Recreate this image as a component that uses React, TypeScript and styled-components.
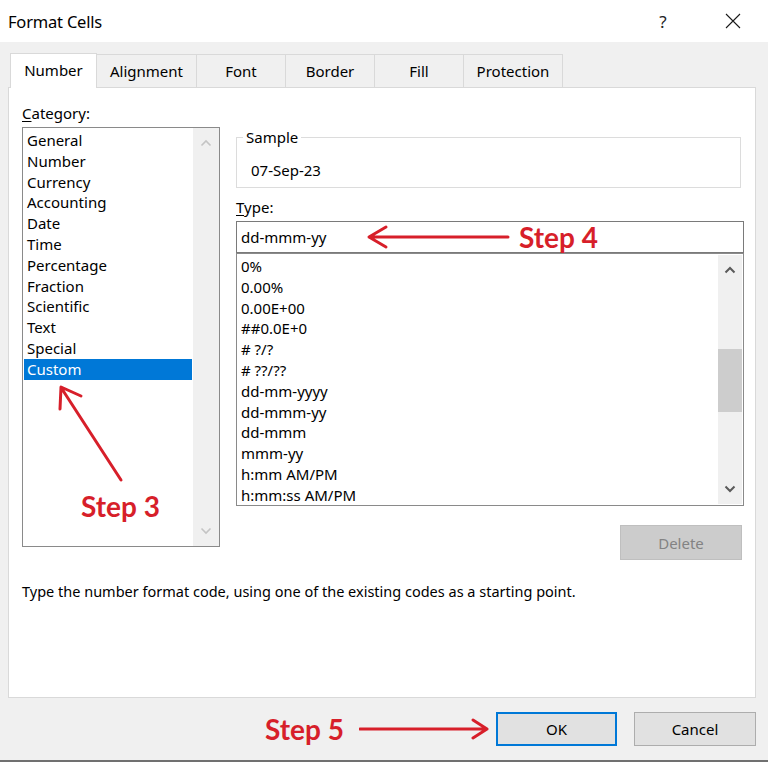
import styled, { createGlobalStyle } from 'styled-components';

const RED = '#d71f2a';
const UI_FONT = '"Noto Sans", "Open Sans", sans-serif';

const categories = [
  'General',
  'Number',
  'Currency',
  'Accounting',
  'Date',
  'Time',
  'Percentage',
  'Fraction',
  'Scientific',
  'Text',
  'Special',
  'Custom',
];

const formats = [
  '0%',
  '0.00%',
  '0.00E+00',
  '##0.0E+0',
  '# ?/?',
  '# ??/??',
  'dd-mm-yyyy',
  'dd-mmm-yy',
  'dd-mmm',
  'mmm-yy',
  'h:mm AM/PM',
  'h:mm:ss AM/PM',
];

const tabs = [
  { label: 'Number', width: 87 },
  { label: 'Alignment', width: 100 },
  { label: 'Font', width: 89 },
  { label: 'Border', width: 89 },
  { label: 'Fill', width: 89 },
  { label: 'Protection', width: 99 },
];

const GlobalStyle = createGlobalStyle`
  html, body {
    margin: 0;
    padding: 0;
  }
  body {
    background: #f0f0f0;
    font-family: ${UI_FONT};
  }
`;

const Window = styled.div`
  position: relative;
  width: 768px;
  height: 762px;
  overflow: hidden;
  box-sizing: border-box;
  display: flex;
  flex-direction: column;
  background: #f0f0f0;
  border-bottom: 2px solid #707070;
`;

const TitleBar = styled.header`
  height: 42px;
  flex-shrink: 0;
  display: flex;
  align-items: center;
  padding-left: 8px;
  background: #fff;
`;

const Title = styled.h1`
  margin: 0;
  font-size: 16.5px;
  font-weight: 400;
  color: #000;
  letter-spacing: -0.2px;
`;

const TitleControls = styled.div`
  margin-left: auto;
  margin-right: 12px;
  display: flex;
  align-items: center;
  gap: 24px;
`;

const TitleButton = styled.div`
  width: 46px;
  height: 42px;
  display: flex;
  align-items: center;
  justify-content: center;
  font-size: 17px;
  color: #222;
`;

const TabStrip = styled.nav`
  height: 35px;
  margin-top: 11px;
  padding-left: 10px;
  display: flex;
  align-items: flex-end;
`;

const Tab = styled.div<{ $active?: boolean; $width: number }>`
  position: relative;
  z-index: 1;
  box-sizing: border-box;
  width: ${(p) => p.$width}px;
  height: ${(p) => (p.$active ? 35 : 33)}px;
  margin-bottom: ${(p) => (p.$active ? 0 : 1)}px;
  display: flex;
  align-items: center;
  justify-content: center;
  padding-bottom: ${(p) => (p.$active ? 2 : 0)}px;
  background: ${(p) => (p.$active ? '#fff' : '#f0f0f0')};
  border: 1px solid #d9d9d9;
  border-bottom: none;
  border-left-width: ${(p) => (p.$active ? 1 : 0)}px;
  font-size: 15px;
  color: #000;
`;

const Panel = styled.section`
  box-sizing: border-box;
  width: 748px;
  height: 611px;
  margin: -1px 0 0 8px;
  padding: 15px 11px 0 13px;
  background: #fff;
  border: 1px solid #d9d9d9;
`;

const Columns = styled.div`
  display: grid;
  grid-template-columns: 198px 508px;
  column-gap: 16px;
  align-items: start;
`;

const Column = styled.div`
  display: flex;
  flex-direction: column;
`;

const FieldLabel = styled.div<{ $gap?: number }>`
  margin-top: ${(p) => p.$gap ?? 0}px;
  line-height: 20px;
  font-size: 15px;
  color: #000;
`;

const Key = styled.span`
  text-decoration: underline;
  text-underline-offset: 2px;
`;

const ListBox = styled.div<{ $height: number; $gap?: number }>`
  position: relative;
  box-sizing: border-box;
  height: ${(p) => p.$height}px;
  margin-top: ${(p) => p.$gap ?? 0}px;
  display: flex;
  border: 1px solid #8a8a8a;
  background: #fff;
`;

const Items = styled.ul<{ $pad: number }>`
  flex: 1;
  margin: 0;
  padding: 2px 1px 0 ${(p) => p.$pad}px;
  list-style: none;
  overflow: hidden;
`;

const Item = styled.li<{ $selected?: boolean }>`
  height: 20.8px;
  line-height: 20.8px;
  padding-left: 3px;
  font-size: 15px;
  white-space: nowrap;
  color: ${(p) => (p.$selected ? '#fff' : '#000')};
  background: ${(p) => (p.$selected ? '#0078d7' : 'transparent')};
`;

const ScrollTrack = styled.div<{ $width: number; $inset: number }>`
  width: ${(p) => p.$width}px;
  margin: ${(p) => p.$inset}px;
  display: flex;
  flex-direction: column;
  background: #f0f0f0;
`;

const ScrollButton = styled.div`
  height: 30px;
  flex-shrink: 0;
  display: flex;
  align-items: center;
  justify-content: center;
`;

const ScrollRail = styled.div`
  flex: 1;
`;

const Thumb = styled.div<{ $offset: number; $size: number }>`
  height: ${(p) => p.$size}px;
  margin-top: ${(p) => p.$offset}px;
  background: #cdcdcd;
`;

const SampleSet = styled.fieldset`
  box-sizing: border-box;
  width: 505px;
  min-width: 0;
  margin: 24px 0 0;
  padding: 13px 14px 7px;
  border: 1px solid #dcdcdc;
`;

const SampleLegend = styled.legend`
  margin-left: -8px;
  padding: 0 3px;
  line-height: 20px;
  font-size: 15px;
  color: #000;
`;

const SampleValue = styled.div`
  line-height: 20px;
  font-size: 15px;
  color: #000;
`;

const TypeField = styled.div`
  box-sizing: border-box;
  height: 32px;
  margin-top: 4px;
  padding-left: 4px;
  display: flex;
  align-items: center;
  border: 1px solid #7a7a7a;
  font-size: 15px;
  color: #000;
`;

const DeleteButton = styled.div`
  box-sizing: border-box;
  align-self: flex-end;
  width: 122px;
  height: 35px;
  margin: 19px 2px 0 0;
  display: flex;
  align-items: center;
  justify-content: center;
  background: #cccccc;
  border: 1px solid #bfbfbf;
  font-size: 15px;
  color: #838383;
`;

const Hint = styled.p`
  margin: 21px 0 0;
  line-height: 20px;
  font-size: 14.5px;
  color: #000;
`;

const Footer = styled.footer`
  height: 62px;
  flex-shrink: 0;
  display: flex;
  align-items: center;
  justify-content: flex-end;
  padding-right: 12px;
`;

const StepFive = styled.div`
  display: flex;
  align-items: center;
  gap: 15px;
  margin-right: 6px;
`;

const DialogButton = styled.div<{ $default?: boolean; $gap?: number }>`
  box-sizing: border-box;
  width: ${(p) => (p.$default ? 121 : 122)}px;
  height: 34px;
  margin-left: ${(p) => p.$gap ?? 0}px;
  display: flex;
  align-items: center;
  justify-content: center;
  background: #e1e1e1;
  border: ${(p) => (p.$default ? '2px solid #0078d7' : '1px solid #adadad')};
  font-size: 15px;
  color: #000;
`;

const StepLabel = styled.span`
  font-family: Lato, "Open Sans", sans-serif;
  font-weight: 700;
  font-size: 28px;
  line-height: 30px;
  color: ${RED};
  white-space: nowrap;
`;

const Callouts = styled.div`
  position: absolute;
  inset: 0;
  pointer-events: none;
`;

const CalloutLabel = styled(StepLabel)<{ $x: number; $y: number }>`
  position: absolute;
  left: ${(p) => p.$x}px;
  top: ${(p) => p.$y}px;
`;

const ArrowLayer = styled.svg`
  position: absolute;
  inset: 0;
`;

const Chevron = ({ up, color, weight }: { up?: boolean; color: string; weight: number }) => (
  <svg width="12" height="8" viewBox="0 0 12 8">
    <path
      d={up ? 'M1.5 6.5 L6 2 L10.5 6.5' : 'M1.5 1.5 L6 6 L10.5 1.5'}
      fill="none"
      stroke={color}
      strokeWidth={weight}
    />
  </svg>
);

const CloseIcon = () => (
  <svg width="16" height="16" viewBox="0 0 16 16">
    <path d="M1 1 L15 15 M15 1 L1 15" stroke="#1a1a1a" strokeWidth="1.1" fill="none" />
  </svg>
);

const App = () => {
  return (
    <Window>
      <GlobalStyle />
      <TitleBar>
        <Title>Format Cells</Title>
        <TitleControls>
          <TitleButton>?</TitleButton>
          <TitleButton>
            <CloseIcon />
          </TitleButton>
        </TitleControls>
      </TitleBar>

      <TabStrip>
        {tabs.map((t, i) => (
          <Tab key={t.label} $active={i === 0} $width={t.width}>
            {t.label}
          </Tab>
        ))}
      </TabStrip>

      <Panel>
        <Columns>
          <Column>
            <FieldLabel>
              <Key>C</Key>ategory:
            </FieldLabel>
            <ListBox $height={420} $gap={4}>
              <Items $pad={1}>
                {categories.map((c) => (
                  <Item key={c} $selected={c === 'Custom'}>
                    {c}
                  </Item>
                ))}
              </Items>
              <ScrollTrack $width={26} $inset={0}>
                <ScrollButton>
                  <Chevron up color="#c4c4c4" weight={1.6} />
                </ScrollButton>
                <ScrollRail />
                <ScrollButton>
                  <Chevron color="#c4c4c4" weight={1.6} />
                </ScrollButton>
              </ScrollTrack>
            </ListBox>
          </Column>

          <Column>
            <SampleSet>
              <SampleLegend>Sample</SampleLegend>
              <SampleValue>07-Sep-23</SampleValue>
            </SampleSet>
            <FieldLabel $gap={9}>
              <Key>T</Key>ype:
            </FieldLabel>
            <TypeField>dd-mmm-yy</TypeField>
            <ListBox $height={253}>
              <Items $pad={1}>
                {formats.map((f) => (
                  <Item key={f}>{f}</Item>
                ))}
              </Items>
              <ScrollTrack $width={24} $inset={1}>
                <ScrollButton>
                  <Chevron up color="#5a5a5a" weight={2} />
                </ScrollButton>
                <ScrollRail>
                  <Thumb $offset={64} $size={63} />
                </ScrollRail>
                <ScrollButton>
                  <Chevron color="#5a5a5a" weight={2} />
                </ScrollButton>
              </ScrollTrack>
            </ListBox>
            <DeleteButton>Delete</DeleteButton>
          </Column>
        </Columns>
        <Hint>Type the number format code, using one of the existing codes as a starting point.</Hint>
      </Panel>

      <Footer>
        <StepFive>
          <StepLabel>Step 5</StepLabel>
          <svg width="131" height="22" viewBox="0 0 131 22">
            <path
              d="M1 11 H128 M114 2 L128 11 L114 20"
              fill="none"
              stroke={RED}
              strokeWidth="3"
              strokeLinecap="round"
              strokeLinejoin="round"
            />
          </svg>
        </StepFive>
        <DialogButton $default>OK</DialogButton>
        <DialogButton $gap={17}>Cancel</DialogButton>
      </Footer>

      <Callouts>
        <ArrowLayer width="768" height="762" viewBox="0 0 768 762">
          <g fill="none" stroke={RED} strokeWidth="3" strokeLinecap="round" strokeLinejoin="round">
            <path d="M121 480 L62 389 M81 396 L61 387 L60 409" />
            <path d="M508 237 H369 M386 227 L369 237 L386 247" />
          </g>
        </ArrowLayer>
        <CalloutLabel $x={81} $y={491}>
          Step 3
        </CalloutLabel>
        <CalloutLabel $x={519} $y={222}>
          Step 4
        </CalloutLabel>
      </Callouts>
    </Window>
  );
};

export default App;
